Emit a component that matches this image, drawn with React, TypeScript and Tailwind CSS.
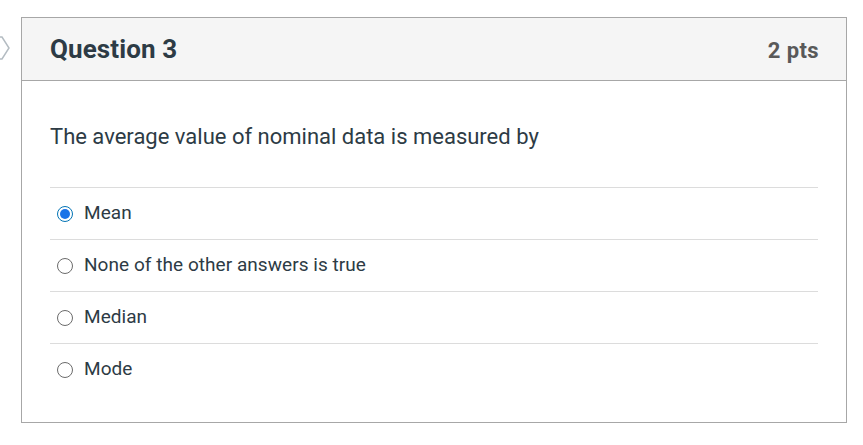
import React from 'react';

const ANSWERS = ['Mean', 'None of the other answers is true', 'Median', 'Mode'];

function Radio({ checked }: { checked: boolean }) {
  if (checked) {
    return (
      <span className="w-4 h-4 rounded-full border border-[#0374b5] bg-white flex items-center justify-center shrink-0">
        <span className="w-[10px] h-[10px] rounded-full bg-[#1a73e8]" />
      </span>
    );
  }
  return <span className="w-4 h-4 rounded-full border border-[#6b6b6b] bg-white shrink-0" />;
}

export default function App() {
  return (
    <div className="relative w-[863px] h-[445px] bg-white font-['Roboto',sans-serif] text-[#2d3b45] overflow-hidden">
      <svg className="absolute left-0 top-[36px]" width="10" height="24" viewBox="0 0 10 24">
        <path d="M-2 1 L2 1 L9 12 L2 23 L-2 23" fill="none" stroke="#b4bcc2" strokeWidth="1.5" />
      </svg>
      <div className="ml-[21px] mt-[17px] w-[826px] h-[406px] border border-[#a7a7a7] flex flex-col">
        <div className="h-[63px] bg-[#f5f5f5] border-b border-[#a7a7a7] flex items-center justify-between pl-[28px] pr-[27px]">
          <h2 className="text-[26px] font-bold text-[#2d3b45] tracking-[0.1px]">Question 3</h2>
          <span className="text-[22px] font-bold text-[#595959] tracking-[0.4px] pt-[3px]">2 pts</span>
        </div>
        <div className="px-[28px] pt-[42px]">
          <p className="text-[22px] leading-[28px]">The average value of nominal data is measured by</p>
          <div className="mt-[36px]">
            {ANSWERS.map((a, i) => (
              <div key={a} className="h-[52px] border-t border-[#dcdcdc] flex items-center gap-[11px] pl-[7px]">
                <Radio checked={i === 0} />
                <span className="text-[19px] tracking-[0.05px]">{a}</span>
              </div>
            ))}
          </div>
        </div>
      </div>
    </div>
  );
}
